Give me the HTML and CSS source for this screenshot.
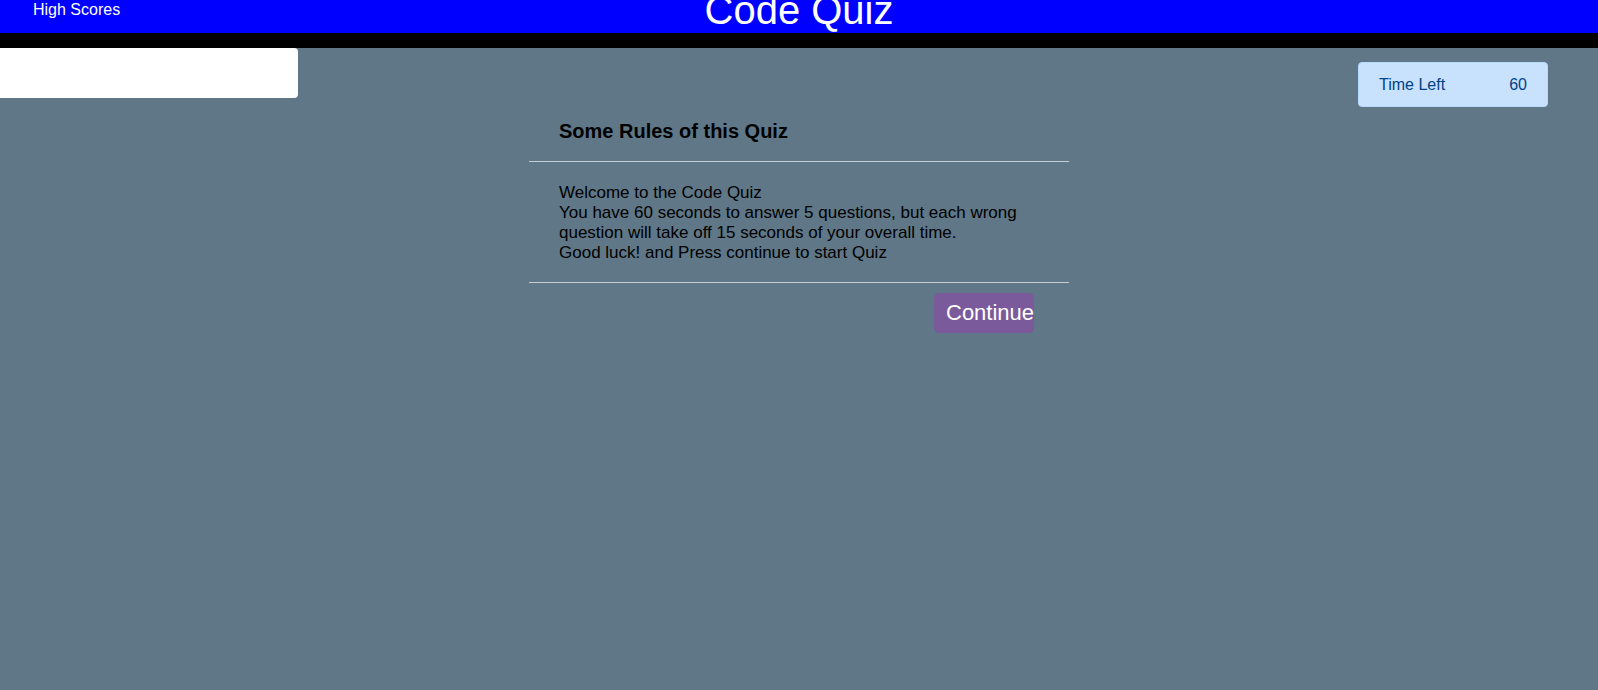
FILE: index.html
```html
<!DOCTYPE html>
<html lang="en">
<head>
    <meta charset="UTF-8">
    <title>Code Quiz</title>
    <link rel="stylesheet" href="styles.css">
</head>
<body>
    <header class="topbar">
        <a href="#" class="scores-link">High Scores</a>
        <h1 class="title">Code Quiz</h1>
    </header>

    <div class="toprow">
        <div class="result-box"></div>
        <div class="timer">
            <span>Time Left</span>
            <span id="time">60</span>
        </div>
    </div>

    <div class="rules">
        <div class="rules-head">
            <h2>Some Rules of this Quiz</h2>
        </div>
        <hr>
        <div class="rules-body">
            Welcome to the Code Quiz<br>
            You have 60 seconds to answer 5 questions, but each wrong<br>
            question will take off 15 seconds of your overall time.<br>
            Good luck! and Press continue to start Quiz
        </div>
        <hr>
        <div class="rules-foot">
            <button class="btn-continue">Continue</button>
        </div>
    </div>
</body>
</html>
```

FILE: styles.css
```css
* {
    box-sizing: border-box;
}

body {
    margin: 0;
    background: #5f7787;
    font-family: "Liberation Sans", Arial, sans-serif;
    color: #000;
}

/* blue bar with the black strip under it */
.topbar {
    display: grid;
    grid-template-columns: 1fr auto 1fr;
    height: 48px;
    background: #0000ff;
    border-bottom: 15px solid #000;
}

.topbar .scores-link {
    padding-left: 33px;
    color: #fff;
    font-size: 16px;
    line-height: 19px;
    text-decoration: none;
}

.topbar .title {
    margin: -10px 0 0;
    color: #fff;
    font-size: 40px;
    font-weight: normal;
    line-height: 40px;
}

.toprow {
    display: flex;
    justify-content: space-between;
    align-items: flex-start;
}

.result-box {
    width: 298px;
    height: 50px;
    background: #fff;
    border-radius: 0 4px 4px 0;
}

.timer {
    display: flex;
    justify-content: space-between;
    width: 190px;
    margin: 14px 50px 0 0;
    padding: 12px 20px;
    background: #c8e2fe;
    border: 1px solid #b8daff;
    border-radius: 4px;
    color: #004085;
    font-size: 16px;
    line-height: 19px;
}

.rules {
    width: 540px;
    margin: 0 auto;
}

.rules hr {
    margin: 0;
    border: 0;
    border-top: 1px solid #c9cdd1;
}

.rules-head {
    padding: 13px 30px 18px;
}

.rules-head h2 {
    margin: 0;
    font-size: 20px;
    font-weight: bold;
    line-height: 23px;
}

.rules-body {
    padding: 21px 30px 19px;
    font-size: 17px;
    line-height: 20px;
}

.rules-foot {
    display: flex;
    justify-content: flex-end;
    padding: 10px 35px 0 0;
}

.btn-continue {
    width: 100px;
    height: 40px;
    padding: 0 0 0 12px;
    overflow: hidden;
    white-space: nowrap;
    text-align: left;
    background: #7a5a9a;
    border: 0;
    border-radius: 5px;
    color: #fff;
    font-family: "Liberation Sans", Arial, sans-serif;
    font-size: 22px;
    cursor: pointer;
}
```
